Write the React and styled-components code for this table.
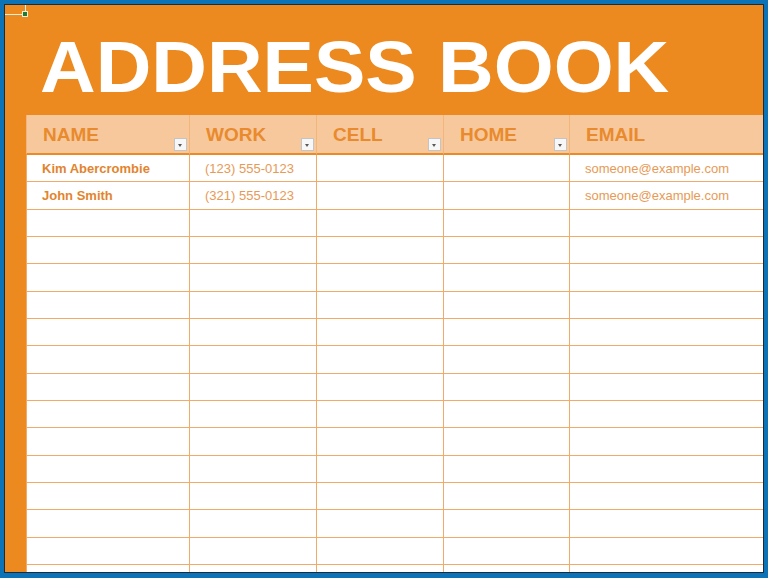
import React from 'react';
import styled, { createGlobalStyle } from 'styled-components';

const GlobalStyle = createGlobalStyle`
	html, body {
		margin: 0;
		padding: 0;
	}
	body {
		font-family: "Liberation Sans", Arial, sans-serif;
		background: #0b73b6;
	}
`;

const columns = ['NAME', 'WORK', 'CELL', 'HOME', 'EMAIL'];

const contacts = [
	{ name: 'Kim Abercrombie', work: '(123) 555-0123', email: 'someone@example.com' },
	{ name: 'John Smith', work: '(321) 555-0123', email: 'someone@example.com' },
];

const EMPTY_ROWS = 14;

const App = () => {
	const rows = [
		...contacts,
		...Array.from({ length: EMPTY_ROWS }, () => ({ name: '', work: '', email: '' })),
	];

	return (
		<>
			<GlobalStyle />
			<Frame>
				<Sheet>
					<SelectionMark>
						<Handle />
					</SelectionMark>
					<TitleBar>
						<Title>ADDRESS BOOK</Title>
					</TitleBar>
					<Table>
						{columns.map((col, i) => (
							<HeaderCell key={col}>
								{col}
								{i < columns.length - 1 && <FilterButton />}
							</HeaderCell>
						))}
						{rows.map((row, r) => (
							<React.Fragment key={r}>
								<Cell $bold>{row.name}</Cell>
								<Cell>{row.work}</Cell>
								<Cell />
								<Cell />
								<Cell>{row.email}</Cell>
							</React.Fragment>
						))}
					</Table>
				</Sheet>
			</Frame>
		</>
	);
};

export default App;

// Styled components
const Frame = styled.div`
	width: 768px;
	height: 578px;
	box-sizing: border-box;
	padding: 4px 4px 5px 4px;
	background: #0b73b6;
`;

const Sheet = styled.div`
	position: relative;
	display: flex;
	flex-direction: column;
	height: 100%;
	box-sizing: border-box;
	border: 1px solid #1b2b3b;
	background: #ec8a1f;
	overflow: hidden;
`;

const SelectionMark = styled.div`
	position: absolute;
	left: 0;
	top: 0;
	width: 20px;
	height: 9px;
	border-right: 1px solid #e6efd8;
	border-bottom: 1px solid #e6efd8;
`;

const Handle = styled.span`
	position: absolute;
	right: -3px;
	bottom: -3px;
	width: 4px;
	height: 4px;
	background: #1f7a34;
	border: 1px solid #e6efd8;
`;

const TitleBar = styled.div`
	padding: 26px 0 12px 35px;
`;

const Title = styled.h1`
	margin: 0;
	font-family: "Liberation Sans", Arial, sans-serif;
	font-weight: 700;
	font-size: 72px;
	line-height: 72px;
	color: #ffffff;
	white-space: nowrap;
	transform: scaleX(1.07);
	transform-origin: left center;
`;

const Table = styled.div`
	display: grid;
	grid-template-columns: 163px 127px 127px 126px 1fr;
	grid-template-rows: 40px;
	grid-auto-rows: 27.33px;
	margin-left: 21px;
	background: #ffffff;
`;

const HeaderCell = styled.div`
	position: relative;
	box-sizing: border-box;
	padding: 10px 0 0 16px;
	background: #f6c89c;
	border-left: 1px solid #f3b57c;
	border-bottom: 2px solid #ec8a26;
	font-size: 19px;
	line-height: 19px;
	font-weight: 700;
	color: #e98a2c;
`;

const FilterButton = styled.span`
	position: absolute;
	right: 2px;
	bottom: 2px;
	width: 11px;
	height: 11px;
	background: #f7f7f7;
	border: 1px solid #c4c4c4;

	&::after {
		content: '';
		position: absolute;
		left: 3px;
		top: 5px;
		border-left: 2.5px solid transparent;
		border-right: 2.5px solid transparent;
		border-top: 3px solid #5a5a5a;
	}
`;

const Cell = styled.div`
	display: flex;
	align-items: center;
	box-sizing: border-box;
	padding-left: 15px;
	border-left: 1px solid #f2aa68;
	border-bottom: 1px solid #f2aa68;
	font-size: 13px;
	font-weight: ${(p) => (p.$bold ? 700 : 400)};
	color: ${(p) => (p.$bold ? '#e2842e' : '#e79a55')};
	white-space: nowrap;
	overflow: hidden;
`;
